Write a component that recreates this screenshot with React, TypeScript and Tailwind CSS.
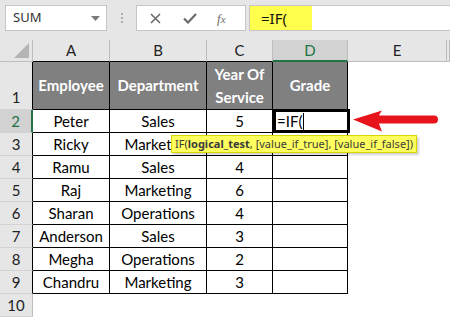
import React from "react";

const hdrCols = ["A", "B", "C", "D", "E", ""];
const rows: [string, string, string][] = [
  ["Peter", "Sales", "5"],
  ["Ricky", "Marketing", "4"],
  ["Ramu", "Sales", "4"],
  ["Raj", "Marketing", "6"],
  ["Sharan", "Operations", "4"],
  ["Anderson", "Sales", "3"],
  ["Megha", "Operations", "2"],
  ["Chandru", "Marketing", "3"],
];

export default function App() {
  const cell = "border-r border-b border-black flex items-center justify-center text-[15px] text-black";
  return (
    <div className="relative w-[450px] h-[319px] overflow-hidden bg-white font-['Lato',sans-serif]">
      {/* top bar */}
      <div className="h-[40px] bg-[#e6e6e6] flex items-start pt-[5px]">
        <div className="ml-[5px] w-[102px] h-[26px] bg-white border border-[#c6c6c6] flex items-center justify-between pl-[7px] pr-[6px]">
          <span className="font-['Noto_Sans',sans-serif] text-[13px] text-[#333]">SUM</span>
          <svg width="9" height="5" viewBox="0 0 9 5"><path d="M0 0h9L4.5 5z" fill="#7a7a7a" /></svg>
        </div>
        <div className="ml-[14px] mt-[8px] flex flex-col gap-[2px]">
          <div className="w-[2px] h-[2px] bg-[#b0b0b0]" />
          <div className="w-[2px] h-[2px] bg-[#b0b0b0]" />
          <div className="w-[2px] h-[2px] bg-[#b0b0b0]" />
        </div>
        <div className="ml-[13px] w-[110px] h-[26px] bg-white border border-[#c6c6c6] flex items-center">
          <svg className="ml-[13px]" width="11" height="11" viewBox="0 0 11 11"><path d="M1 1L10 10M10 1L1 10" stroke="#6b6b6b" strokeWidth="1.6" /></svg>
          <svg className="ml-[22px]" width="14" height="11" viewBox="0 0 14 11"><path d="M1 5.5L5 9.5L13 1" stroke="#6b6b6b" strokeWidth="2.2" fill="none" /></svg>
          <span className="ml-[20px] font-['Liberation_Serif',serif] italic text-[13px] text-[#6b6b6b] leading-none">f<span className="text-[11px]">x</span></span>
        </div>
        <div className="ml-[3px] flex-1 h-[26px] bg-white border-y border-l border-[#c6c6c6] flex items-stretch">
          <div className="w-[62px] bg-[#ffff4d] flex items-center pl-[11px] text-[15px] text-[#111] font-['Noto_Sans',sans-serif]">=IF(</div>
        </div>
      </div>

      {/* sheet grid */}
      <div className="grid grid-cols-[33px_77px_97px_66px_75px_99px_3px] grid-rows-[22px_48px_repeat(9,23px)]">
        {/* header row */}
        <div className="bg-[#e6e6e6] border-r border-b border-[#bdbdbd] relative">
          <svg className="absolute right-[3px] bottom-[3px]" width="15" height="15" viewBox="0 0 15 15"><path d="M15 0V15H0z" fill="#b5b5b5" /></svg>
        </div>
        {hdrCols.map((c, i) => (
          <div
            key={i}
            className={
              c === "D"
                ? "bg-[#d2d2d2] border-r border-[#bdbdbd] border-b-2 border-b-[#217346] flex items-center justify-center text-[15px] text-[#217346]"
                : i < 4
                ? "bg-[#e6e6e6] border-r border-[#bdbdbd] border-b border-b-black flex items-center justify-center text-[15px] text-[#222]"
                : "bg-[#e6e6e6] border-r border-[#bdbdbd] border-b border-b-[#bdbdbd] flex items-center justify-center text-[15px] text-[#222]"
            }
          >
            {c}
          </div>
        ))}

        {/* row 1 */}
        <div className="bg-[#e6e6e6] border-r border-black border-b border-b-[#d4d4d4] flex items-end justify-center pb-[1px] text-[15px] text-[#222]">1</div>
        <div className={`${cell} bg-[#808080] font-bold text-white`}>Employee</div>
        <div className={`${cell} bg-[#808080] font-bold text-white`}>Department</div>
        <div className={`${cell} bg-[#808080] font-bold text-white text-center leading-[23px]`}>Year Of<br />Service</div>
        <div className={`${cell} bg-[#808080] font-bold text-white`}>Grade</div>
        <div />
        <div />

        {rows.map((r, i) => {
          const n = i + 2;
          const sel = n === 2;
          return (
            <React.Fragment key={n}>
              <div
                className={
                  sel
                    ? "bg-[#d2d2d2] border-r-2 border-[#217346] border-b border-b-[#d4d4d4] flex items-center justify-center text-[15px] text-[#217346]"
                    : "bg-[#e6e6e6] border-r border-black border-b border-b-[#d4d4d4] flex items-center justify-center text-[15px] text-[#222]"
                }
              >
                {n}
              </div>
              <div className={cell}>{r[0]}</div>
              <div className={cell}>{r[1]}</div>
              <div className={cell}>{r[2]}</div>
              <div className={`${cell} relative`}>
                {sel && (
                  <div className="absolute left-0 top-[-1px] w-[77px] h-[24px] border-[3px] border-black flex items-center pl-[1px] text-[15px] text-black">
                    =IF(
                    <span className="inline-block w-[1px] h-[17px] bg-black ml-[1px]" />
                  </div>
                )}
              </div>
              <div />
              <div />
            </React.Fragment>
          );
        })}

        {/* row 10 */}
        <div className="bg-[#e6e6e6] border-r border-[#bdbdbd] border-b border-b-[#d4d4d4] flex items-center justify-center text-[15px] text-[#222]">10</div>
      </div>

      {/* tooltip */}
      <div className="absolute left-[171px] top-[135px] h-[18px] px-[3px] bg-[#ffff5e] border border-[#d6d600] shadow-[2px_2px_2px_rgba(0,0,0,0.18)] flex items-center font-['Noto_Sans',sans-serif] text-[11px] text-[#3a3a3a] whitespace-nowrap">
        IF(<b>logical_test</b>, [value_if_true], [value_if_false])
      </div>

      {/* arrow */}
      <svg className="absolute left-[350px] top-[108px]" width="92" height="28" viewBox="0 0 92 28">
        <path
          d="M3 11.5 L32 2.5 Q29 7 29 7.5 L84 7.5 A4 4 0 0 1 84 15.5 L29 15.5 Q29 16 32 23.5 Z"
          fill="#e8141c"
        />
      </svg>
    </div>
  );
}
